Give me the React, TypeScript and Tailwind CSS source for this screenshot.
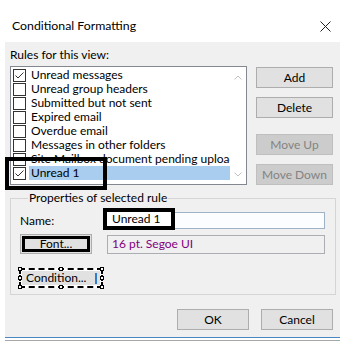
import React from 'react';

const rules = [
  { label: 'Unread messages', checked: true },
  { label: 'Unread group headers', checked: false },
  { label: 'Submitted but not sent', checked: false },
  { label: 'Expired email', checked: false },
  { label: 'Overdue email', checked: false },
  { label: 'Messages in other folders', checked: false },
  { label: 'Site Mailbox document pending upload', checked: false },
  { label: 'Unread 1', checked: true, selected: true },
];

const CheckBox: React.FC<{ checked: boolean }> = ({ checked }) => (
  <div className="w-[13px] h-[13px] shrink-0 border border-[#333333] bg-white flex items-center justify-center">
    {checked && (
      <svg width="11" height="11" viewBox="0 0 11 11">
        <path d="M1.5 5.5 L4 8 L9.5 2.5" fill="none" stroke="#333333" strokeWidth="1" />
      </svg>
    )}
  </div>
);

const Chevron: React.FC<{ up?: boolean }> = ({ up }) => (
  <svg width="8" height="5" viewBox="0 0 8 5">
    <path d={up ? 'M0.5 4.5 L4 1 L7.5 4.5' : 'M0.5 0.5 L4 4 L7.5 0.5'} fill="none" stroke="#c2c2c2" strokeWidth="1" />
  </svg>
);

const Btn: React.FC<{ label: string; disabled?: boolean; className?: string }> = ({ label, disabled, className }) => (
  <div
    className={
      'h-[21px] flex items-center justify-center border ' +
      (disabled ? 'bg-[#cccccc] border-[#bfbfbf] text-[#838383] ' : 'bg-[#e1e1e1] border-[#adadad] text-black ') +
      (className ?? '')
    }
  >
    {label}
  </div>
);

const App: React.FC = () => {
  return (
    <div className="relative w-[352px] h-[347px] bg-white overflow-hidden text-[12px] leading-[14px] text-black font-['Segoe_UI',Lato,sans-serif]">
      {/* title bar */}
      <div className="h-[42px] flex items-center justify-between pl-[12px] pr-[21px]">
        <span className="text-[12.3px] pt-[10px]">Conditional Formatting</span>
        <svg width="11" height="11" viewBox="0 0 11 11" className="mt-[11px]">
          <path d="M0.5 0.5 L10.5 10.5 M10.5 0.5 L0.5 10.5" stroke="#222222" strokeWidth="1" />
        </svg>
      </div>

      {/* dialog body */}
      <div className="ml-[5px] w-[335px] h-[295px] bg-[#f0f0f0] flex flex-col pl-[5px]">
        <div className="mt-[6px]">Rules for this view:</div>

        <div className="mt-[4px] flex">
          <div className="w-[237px] h-[119px] border border-[#828790] bg-white flex">
            <div className="flex-1 min-w-0 pt-[1px] overflow-x-clip">
              {rules.map((r) => (
                <div key={r.label} className="h-[14px] flex items-center pl-[2px]">
                  <CheckBox checked={r.checked} />
                  <div
                    className={
                      'ml-[3px] flex-1 h-[14px] pl-[2px] whitespace-nowrap overflow-x-clip ' +
                      (r.selected ? 'bg-[#a8cdef]' : '')
                    }
                  >
                    {r.label}
                  </div>
                </div>
              ))}
            </div>
            <div className="w-[16px] flex flex-col items-center justify-between pt-[8px] pb-[7px]">
              <Chevron up />
              <Chevron />
            </div>
          </div>

          <div className="ml-[9px] w-[77px] flex flex-col pt-[1px]">
            <Btn label="Add" />
            <Btn label="Delete" className="mt-[9px]" />
            <Btn label="Move Up" disabled className="mt-[16px]" />
            <Btn label="Move Down" disabled className="mt-[9px]" />
          </div>
        </div>

        <fieldset className="mt-[6px] w-[326px] h-[104px] border border-[#d5d5d5] pl-[9px]">
          <legend className="ml-[8px] px-[1px] leading-[14px]">Properties of selected rule</legend>

          <div className="mt-[7px] flex items-center h-[17px]">
            <div className="w-[87px]">Name:</div>
            <div className="w-[218px] h-[17px] border border-[#9fb3c8] bg-[#fbfdff]" />
          </div>

          <div className="mt-[5px] flex items-center">
            <div className="w-[72px] h-[20px] border border-[#adadad] bg-[#e1e1e1] p-[1px]">
              <div className="h-full border-[3px] border-black bg-[#e1e1e1] flex items-center justify-center leading-[12px]">
                Font...
              </div>
            </div>
            <div className="ml-[15px] w-[218px] h-[19px] border border-[#abadb3] flex items-center pl-[4px] text-[#800080]">
              16 pt. Segoe UI
            </div>
          </div>

          <div className="mt-[14px] -ml-[1px] relative w-[84px] h-[20px] border-2 border-dashed border-black bg-white p-[1px]">
            <div className="h-full bg-[#e1e1e1] flex items-center pl-[4px] leading-[12px]">Condition...</div>
            <div className="absolute right-[4px] top-[3px] w-[2px] h-[11px] bg-[#2f7fd0]" />
            <div className="absolute -left-[3px] -top-[3px] w-[4px] h-[4px] bg-white border border-black" />
            <div className="absolute left-[38px] -top-[3px] w-[4px] h-[4px] bg-white border border-black" />
            <div className="absolute -right-[3px] -top-[3px] w-[4px] h-[4px] bg-white border border-black" />
            <div className="absolute -left-[3px] top-[6px] w-[4px] h-[4px] bg-white border border-black" />
            <div className="absolute -right-[3px] top-[6px] w-[4px] h-[4px] bg-white border border-black" />
            <div className="absolute -left-[3px] -bottom-[3px] w-[4px] h-[4px] bg-white border border-black" />
            <div className="absolute left-[38px] -bottom-[3px] w-[4px] h-[4px] bg-white border border-black" />
            <div className="absolute -right-[3px] -bottom-[3px] w-[4px] h-[4px] bg-white border border-black" />
          </div>
        </fieldset>

        <div className="mt-[14px] flex justify-end pr-[7px] gap-[12px]">
          <Btn label="OK" className="w-[72px]" />
          <Btn label="Cancel" className="w-[72px]" />
        </div>
      </div>
      <div className="ml-[5px] w-[335px] h-[1px] bg-[#4a86c2]" />
      <div className="ml-[5px] mt-[2px] w-[335px] h-[1px] bg-[#a8a8a8]" />

      {/* annotation boxes drawn over the dialog */}
      <div className="absolute left-[5px] top-[157px] w-[102px] h-[33px] border-[4px] border-black" />
      <div className="absolute left-[103px] top-[208px] w-[72px] h-[22px] border-[4px] border-black bg-white flex items-center pl-[5px]">
        Unread 1
      </div>
    </div>
  );
};

export default App;
